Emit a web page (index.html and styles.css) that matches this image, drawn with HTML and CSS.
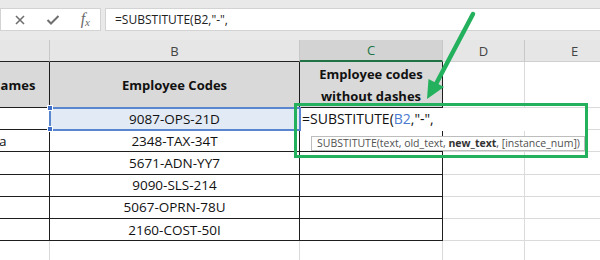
FILE: index.html
```html
<!DOCTYPE html>
<html>
<head>
<meta charset="utf-8">
<link rel="stylesheet" href="styles.css">
</head>
<body>
<div class="fbar">
  <div class="fbtns">
    <svg class="ico" width="12" height="12" viewBox="0 0 12 12"><path d="M2 2 L10 10 M10 2 L2 10" stroke="#6f6f6f" stroke-width="1.6" fill="none"/></svg>
    <svg class="ico" width="14" height="12" viewBox="0 0 14 12"><path d="M1.5 6 L5 9.5 L12.5 2" stroke="#6f6f6f" stroke-width="2" fill="none"/></svg>
    <span class="fx">f<sub>x</sub></span>
  </div>
  <div class="finput">=SUBSTITUTE(B2,"-",</div>
</div>
<div class="sheet">
  <div class="ch">A</div><div class="ch">B</div><div class="ch on">C</div><div class="ch lt">D</div><div class="ch lt">E</div>

  <div class="c th">Employee Names</div><div class="c th">Employee Codes</div><div class="c th wrap">Employee codes<br>without dashes</div><div class="c g"></div><div class="c g"></div>

  <div class="c name">John Smith</div><div class="c sel">9087-OPS-21D</div><div class="c"></div><div class="c g"></div><div class="c g"></div>
  <div class="c name">Isabella Garcia</div><div class="c">2348-TAX-34T</div><div class="c"></div><div class="c g"></div><div class="c g"></div>
  <div class="c name">Sam Brown</div><div class="c">5671-ADN-YY7</div><div class="c"></div><div class="c g"></div><div class="c g"></div>
  <div class="c name">Tom Hardy</div><div class="c">9090-SLS-214</div><div class="c"></div><div class="c g"></div><div class="c g"></div>
  <div class="c name">Lily Chen</div><div class="c">5067-OPRN-78U</div><div class="c"></div><div class="c g"></div><div class="c g"></div>
  <div class="c name">Mark Lee</div><div class="c">2160-COST-50I</div><div class="c"></div><div class="c g"></div><div class="c g"></div>

  <div class="c e"></div><div class="c e"></div><div class="c e"></div><div class="c e"></div><div class="c e"></div>
</div>

<div class="editor">=SUBSTITUTE(<span class="ref">B2</span>,"-",</div>
<div class="tip">SUBSTITUTE(text, old_text, <b>new_text</b>, [instance_num])</div>
<div class="mark"></div>
<svg class="arrow" width="600" height="260" viewBox="0 0 600 260">
  <line x1="473" y1="14" x2="436" y2="84" stroke="#24b15e" stroke-width="4.5" stroke-linecap="round"/>
  <polygon points="427,99 428.5,79 444,87" fill="#24b15e"/>
</svg>
</body>
</html>
```

FILE: styles.css
```css
body {
  margin: 0;
  width: 600px;
  height: 260px;
  overflow: hidden;
  position: relative;
  background: #fff;
  font-family: "Open Sans", "Noto Sans", sans-serif;
}

.fbar {
  display: flex;
  gap: 4px;
  background: #e9e9e9;
  padding: 8px 0 9px;
  height: 23px;
}

.fbtns {
  width: 101px;
  box-sizing: border-box;
  background: #fff;
  border: 1px solid #d3d3d3;
  display: flex;
  align-items: center;
  justify-content: space-between;
  padding: 0 10px 0 13px;
}

.fx {
  font-family: "Liberation Serif", serif;
  font-style: italic;
  font-size: 16px;
  color: #6a6a6a;
  line-height: 1;
}
.fx sub {
  font-size: 11px;
  vertical-align: -2px;
}

.finput {
  flex: 1;
  box-sizing: border-box;
  background: #fff;
  border: 1px solid #d3d3d3;
  border-right: none;
  font-size: 12px;
  line-height: 21px;
  padding-left: 9px;
  color: #222;
}

.sheet {
  display: grid;
  grid-template-columns: 140px 250px 143px 82px 100px;
  grid-template-rows: 22px 46px repeat(7, 22.2px);
  margin-left: -90px;
}

.ch {
  box-sizing: border-box;
  background: #e6e6e6;
  border-right: 1px solid #c8c8c8;
  border-bottom: 1px solid #222;
  font-size: 13px;
  color: #444;
  display: flex;
  align-items: center;
  justify-content: center;
}
.ch.lt {
  border-bottom-color: #cfcfcf;
}
.ch.on {
  background: #d3d3d3;
  color: #217346;
  border-bottom: 2px solid #217346;
}

.c {
  box-sizing: border-box;
  border-right: 1px solid #1e1e1e;
  border-bottom: 1px solid #1e1e1e;
  font-size: 13.5px;
  color: #111;
  display: flex;
  align-items: center;
  justify-content: center;
  white-space: nowrap;
  overflow: hidden;
}
.c.name {
  justify-content: flex-start;
  padding-left: 5px;
}
.c.th {
  background: #d9d9d9;
  font-weight: 700;
  font-size: 13px;
}
.c.wrap {
  white-space: normal;
  text-align: center;
  line-height: 22px;
}
.c.g {
  border-right-color: #dadada;
  border-bottom-color: #dadada;
}
.c.e {
  border-right-color: #dadada;
  border-bottom: none;
}

.c.sel {
  position: relative;
  overflow: visible;
  background: #e2eaf5;
  outline: 2px solid #5a86d0;
  outline-offset: -1px;
  z-index: 1;
}
.c.sel::before,
.c.sel::after {
  content: "";
  position: absolute;
  left: -3px;
  width: 4px;
  height: 4px;
  background: #3f6fc6;
  border: 1px solid #fff;
}
.c.sel::before { top: -3px; }
.c.sel::after { bottom: -3px; }

.editor {
  position: absolute;
  left: 301px;
  top: 108px;
  width: 284px;
  height: 23px;
  background: #fff;
  font-size: 14px;
  line-height: 22px;
  padding-left: 1px;
  color: #111;
  z-index: 2;
}
.editor .ref {
  color: #4a7ad0;
}

.tip {
  position: absolute;
  left: 311px;
  top: 136px;
  width: 274px;
  height: 15px;
  box-sizing: border-box;
  border: 1px solid #bdbdbd;
  background: #fff;
  font-size: 10.5px;
  line-height: 13px;
  padding-left: 5px;
  color: #505050;
  white-space: nowrap;
  z-index: 3;
}
.tip b {
  color: #333;
}

.mark {
  position: absolute;
  left: 294px;
  top: 103px;
  width: 294px;
  height: 55px;
  box-sizing: border-box;
  border: 3px solid #24b15e;
  z-index: 4;
}

.arrow {
  position: absolute;
  left: 0;
  top: 0;
  z-index: 5;
  pointer-events: none;
}
```
